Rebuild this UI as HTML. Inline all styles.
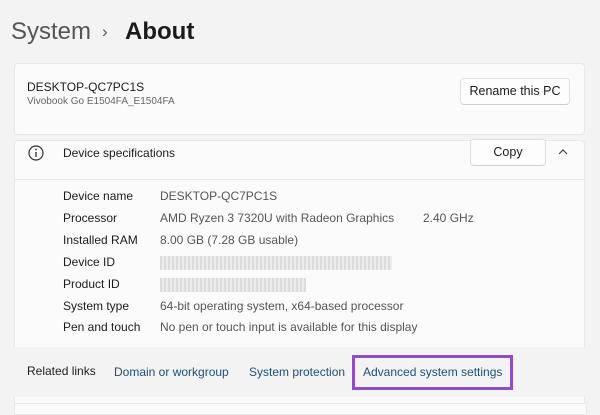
<!DOCTYPE html>
<html><head><style>
body{margin:0;width:600px;height:410px;background:#f3f3f3;font-family:"Liberation Sans",sans-serif;position:relative;overflow:hidden;color:#1b1b1b}
.a{position:absolute;white-space:nowrap}
.card{position:absolute;left:14px;width:571px;background:#fbfbfb;border:1px solid #e8e8e8;border-radius:4px;box-sizing:border-box}
.btn{position:absolute;background:#fdfdfd;border:1px solid #e0e0e0;border-bottom-color:#cfcfcf;border-radius:4px;font-size:12.5px;text-align:center;box-sizing:border-box}
.l{left:63px;font-size:12px;color:#1b1b1b}
.v{left:160px;font-size:12px;color:#555}
.blur{position:absolute;left:160px;height:14px;background:repeating-linear-gradient(90deg,#d8d8d8 0 2px,#eaeaea 2px 4px);opacity:.9}
.lk{font-size:12px;color:#1f4e79}
</style></head><body>
<div class="a" style="left:11px;top:18px;font-size:24px;color:#555">System</div>
<div class="a" style="left:102px;top:22px;font-size:17px;color:#555">›</div>
<div class="a" style="left:125px;top:18px;font-size:24px;color:#1b1b1b;font-weight:600">About</div>

<div class="card" style="top:63px;height:72px"></div>
<div class="a" style="left:27px;top:80px;font-size:12px">DESKTOP-QC7PC1S</div>
<div class="a" style="left:27px;top:96px;font-size:10px;color:#666">Vivobook Go E1504FA_E1504FA</div>
<div class="btn" style="left:460px;top:78px;width:110px;height:27px;line-height:25px">Rename this PC</div>

<div class="card" style="top:140px;height:265px;background:#fbfbfb"></div>
<div style="position:absolute;left:15px;top:179px;width:569px;height:1px;background:#e6e6e6"></div>
<svg class="a" style="left:27px;top:144px" width="18" height="18" viewBox="0 0 18 18"><circle cx="9" cy="9" r="7" fill="none" stroke="#333" stroke-width="1.2"/><line x1="9" y1="8" x2="9" y2="13" stroke="#333" stroke-width="1.3"/><circle cx="9" cy="5.5" r="0.9" fill="#333"/></svg>
<div class="a" style="left:63px;top:146px;font-size:12px">Device specifications</div>
<div class="btn" style="left:470px;top:139px;width:76px;height:27px;line-height:25px">Copy</div>
<svg class="a" style="left:557px;top:148px" width="12" height="8" viewBox="0 0 12 8"><path d="M2 6 L6 2 L10 6" fill="none" stroke="#444" stroke-width="1.2"/></svg>

<div class="a l" style="top:189px">Device name</div><div class="a v" style="top:189px">DESKTOP-QC7PC1S</div>
<div class="a l" style="top:211px">Processor</div><div class="a v" style="top:211px">AMD Ryzen 3 7320U with Radeon Graphics</div><div class="a v" style="left:423px;top:211px">2.40 GHz</div>
<div class="a l" style="top:233px">Installed RAM</div><div class="a v" style="top:233px">8.00 GB (7.28 GB usable)</div>
<div class="a l" style="top:255px">Device ID</div><div class="blur" style="top:256px;width:232px"></div>
<div class="a l" style="top:277px">Product ID</div><div class="blur" style="top:278px;width:146px"></div>
<div class="a l" style="top:299px">System type</div><div class="a v" style="top:299px">64-bit operating system, x64-based processor</div>
<div class="a l" style="top:320px">Pen and touch</div><div class="a v" style="top:320px">No pen or touch input is available for this display</div>

<div style="position:absolute;left:14px;top:347px;width:571px;height:50px;background:#f3f3f3"></div>
<div class="a" style="left:27px;top:364px;font-size:12px">Related links</div>
<div class="a lk" style="left:114px;top:365px">Domain or workgroup</div>
<div class="a lk" style="left:249px;top:365px">System protection</div>
<div style="position:absolute;left:352px;top:355px;width:161px;height:35px;border:3px solid #8e4fc0;box-sizing:border-box"></div>
<div class="a lk" style="left:363px;top:365px">Advanced system settings</div>
<div style="position:absolute;left:14px;top:403px;width:571px;height:10px;background:#fbfbfb;border:1px solid #e8e8e8"></div>
</body></html>
